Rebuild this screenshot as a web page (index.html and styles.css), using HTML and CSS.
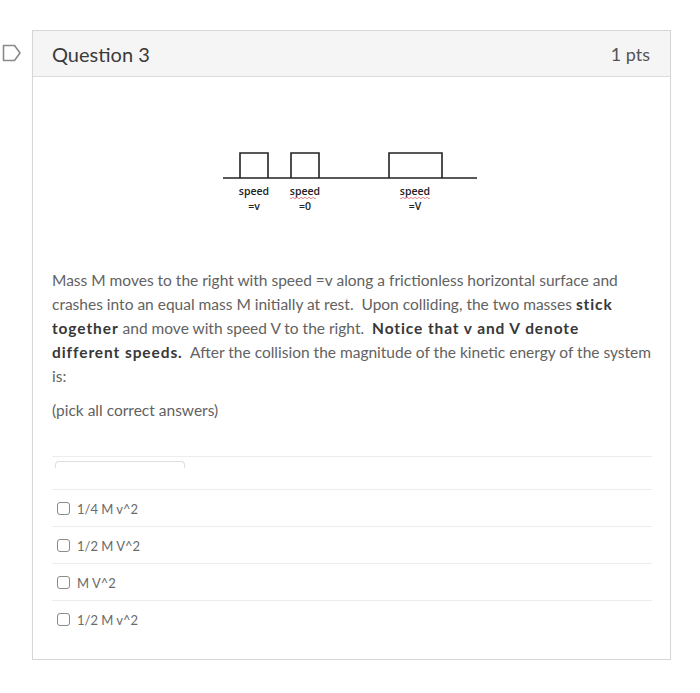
FILE: index.html
```html
<!DOCTYPE html>
<html>
<head>
<meta charset="utf-8">
<link rel="stylesheet" href="styles.css">
</head>
<body>
<div class="page">
  <div class="flag">
    <svg width="20" height="18" viewBox="0 0 20 18"><path d="M1.5 1.5 H12.5 L18 9 L12.5 16.5 H1.5 Z" fill="none" stroke="#8a8a8a" stroke-width="1.6" stroke-linejoin="round"/></svg>
  </div>
  <div class="card">
    <div class="card-header">
      <span class="q-title">Question 3</span>
      <span class="q-pts">1 pts</span>
    </div>
    <div class="card-body">
      <div class="diagram">
        <svg width="256" height="76" viewBox="0 0 256 76">
          <g fill="none" stroke="#222" stroke-width="1.6">
            <path d="M0 32 H254"/>
            <path d="M17 32 V7 H45 V32"/>
            <path d="M68 32 V7 H96 V32"/>
            <path d="M166 32 V7 H219 V32"/>
          </g>
          <g class="dlabel" text-anchor="middle">
            <text x="31" y="49">speed</text>
            <text x="31" y="64">=v</text>
            <text x="82" y="49">speed</text>
            <text x="82" y="64">=0</text>
            <text x="192" y="49">speed</text>
            <text x="192" y="64">=V</text>
          </g>
          <g fill="none" stroke="#e07070" stroke-width="0.8">
            <path d="M67 52 q1 1.5 2 0 t2 0 t2 0 t2 0 t2 0 t2 0 t2 0 t2 0 t2 0 t2 0 t2 0 t2 0 t2 0"/>
            <path d="M177 52 q1 1.5 2 0 t2 0 t2 0 t2 0 t2 0 t2 0 t2 0 t2 0 t2 0 t2 0 t2 0 t2 0 t2 0 t2 0 t2 0"/>
          </g>
        </svg>
      </div>
      <p class="question">Mass M moves to the right with speed =v along a frictionless horizontal surface and crashes into an equal mass M initially at rest.&nbsp; Upon colliding, the two masses <strong>stick together</strong> and move with speed V to the right.&nbsp; <strong>Notice that v and V denote <span class="nowrap">different speeds.</span></strong>&nbsp; After the collision the magnitude of the kinetic energy of the system is:</p>
      <p class="hint">(pick all correct answers)</p>
      <div class="answers">
        <div class="tab-row"><div class="tab"></div></div>
        <label class="answer"><span class="box"></span>1/4 M v^2</label>
        <label class="answer"><span class="box"></span>1/2 M V^2</label>
        <label class="answer"><span class="box"></span>M V^2</label>
        <label class="answer"><span class="box"></span>1/2 M v^2</label>
      </div>
    </div>
  </div>
</div>
</body>
</html>
```

FILE: styles.css
```css
html, body {
  margin: 0;
  padding: 0;
  background: #fff;
}
body {
  font-family: Lato, "Open Sans", sans-serif;
}
.page {
  display: flex;
  padding-top: 30px;
}
.flag {
  width: 32px;
  padding-top: 14px;
  padding-left: 2px;
  box-sizing: border-box;
}
.flag svg {
  display: block;
}
.card {
  width: 639px;
  height: 630px;
  box-sizing: border-box;
  border: 1px solid #d6d6d6;
  box-shadow: 0 1px 1px rgba(0,0,0,0.05);
}
.card-header {
  height: 46px;
  box-sizing: border-box;
  background: #f5f5f5;
  border-bottom: 1px solid #dcdcdc;
  display: flex;
  align-items: center;
  justify-content: space-between;
  padding: 0 20px 0 19px;
}
.q-title {
  font-size: 20px;
  color: #3a3a3a;
}
.q-pts {
  font-size: 18px;
  color: #555;
}
.card-body {
  padding: 0 18px 0 19px;
}
.diagram {
  display: flex;
  justify-content: center;
  padding-top: 69px;
  padding-right: 3px;
}
.diagram svg {
  display: block;
}
.dlabel {
  font-family: "Open Sans", sans-serif;
  font-size: 10.5px;
  font-weight: 600;
  fill: #222;
}
.question {
  margin: 46px -10px 0 0;
  font-size: 15.5px;
  line-height: 24px;
  color: #626262;
}
.question strong {
  color: #383838;
  font-weight: 700;
  letter-spacing: 0.9px;
}
.nowrap {
  white-space: nowrap;
}
.hint {
  margin: 10px 0 0;
  font-size: 15.5px;
  line-height: 24px;
  color: #626262;
}
.answers {
  margin-top: 34px;
}
.tab-row {
  height: 33px;
  border-top: 1px solid #ececec;
  padding: 4px 0 0 3px;
  box-sizing: border-box;
}
.tab {
  width: 128px;
  height: 6px;
  border: 1px solid #dedede;
  border-bottom: none;
  border-radius: 4px 4px 0 0;
}
.answer {
  display: flex;
  align-items: center;
  height: 37px;
  box-sizing: border-box;
  border-top: 1px solid #ececec;
  font-size: 13px;
  color: #6a6a6a;
  padding-left: 5px;
  padding-top: 1px;
}
.box {
  width: 11px;
  height: 11px;
  border: 1.5px solid #8a8a8a;
  border-radius: 3px;
  margin-right: 7px;
}
```
